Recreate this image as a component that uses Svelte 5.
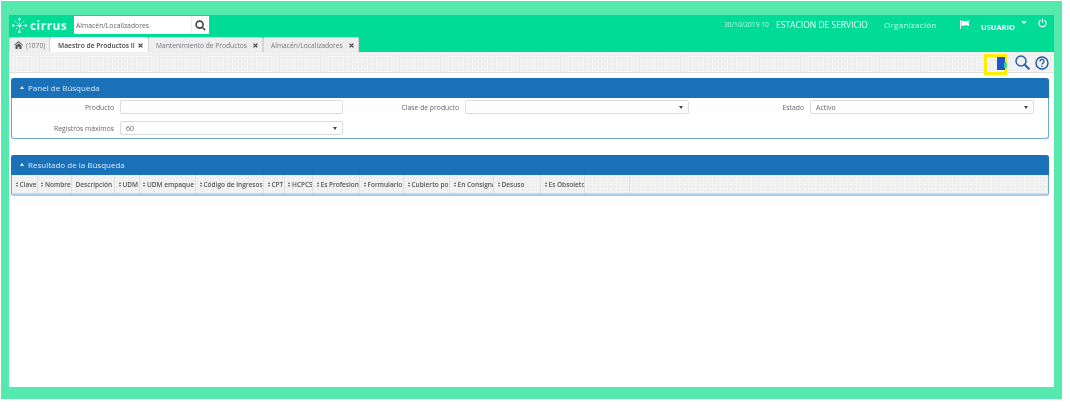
<script>
  const cols = [
    ['Clave', 25.5, 1], ['Nombre', 34.5, 1], ['Descripción', 43, 0], ['UDM', 24.5, 1], ['UDM empaque', 56.5, 1],
    ['Código de ingresos', 68, 1], ['CPT', 20.5, 1], ['HCPCS', 28.5, 1], ['Es Profesional', 47, 1], ['Formulario', 44, 1],
    ['Cubierto por', 46, 1], ['En Consignación', 44, 1], ['Desuso', 47, 1], ['Es Obsoleto', 44, 1], ['', 45, 0]
  ];
  const tabs = [
    ['Maestro de Productos II', 'tab active'],
    ['Mantenimiento de Productos', 'tab'],
    ['Almacén/Localizadores', 'tab']
  ];
</script>

<div class="frame">
  <div class="inner">
    <header class="top">
      <div class="bar">
        <div class="brand">
          <svg width="15" height="15" viewBox="0 0 15 15" fill="none" stroke="#d8fff0" stroke-width="0.9">
            <path d="M7.500 1v13M1 7.500h13M3 3l9 9M12 3l-9 9" stroke-dasharray="2 1.200"/>
            <circle cx="7.500" cy="1.200" r="1" fill="#fff"/><circle cx="7.500" cy="13.800" r="1" fill="#fff"/>
            <circle cx="1.200" cy="7.500" r="1" fill="#fff"/><circle cx="13.800" cy="7.500" r="1" fill="#fff"/>
          </svg>
          <span class="logo">cirrus</span>
        </div>
        <div class="search">
          <span class="q">Almacén/Localizadores</span>
          <span class="go">
            <svg width="11" height="11" viewBox="0 0 11 11" fill="none" stroke="#444" stroke-width="1.600"><circle cx="4.600" cy="4.600" r="3.500"/><path d="M7.200 7.200l3 3"/></svg>
          </span>
        </div>
        <div class="right">
          <span class="date">30/10/2019 10</span>
          <span class="station">ESTACION DE SERVICIO</span>
          <span class="org">Organización</span>
          <svg class="flag" width="10" height="9" viewBox="0 0 10 9" fill="#fff"><path d="M0 0h1v9H0zM1.500 1c2-1 3 .6 5 0l3-.5-1 2.500 1 2.500c-3 .6-4-.6-5 0l-3 .5z"/></svg>
          <span class="user">USUARIO</span>
          <span class="caret"></span>
          <svg class="power" width="9" height="10" viewBox="0 0 9 10" fill="none" stroke="#fff" stroke-width="1.200"><path d="M2.500 2.300a3.600 3.600 0 1 0 4 0M4.500 .5v4"/></svg>
        </div>
      </div>
      <nav class="tabs">
        <div class="tab home">
          <svg width="9" height="8" viewBox="0 0 9 8" fill="#555"><path d="M4.500 0L0 4l.6.6L4.500 1.300 8.400 4.600 9 4zM1.500 4.800V8h2.200V5.700h1.600V8h2.200V4.800L4.500 2.200z"/></svg>
          <span>(1070)</span>
        </div>
        {#each tabs as [label, cls]}
          <div class={cls}>
            <span class="tl">{label}</span>
            <svg class="x" width="5" height="5" viewBox="0 0 5 5" stroke="#444" stroke-width="1.300"><path d="M.6 .6l3.800 3.800M4.400 .6L.6 4.400"/></svg>
          </div>
        {/each}
      </nav>
    </header>

    <div class="tools">
      <span class="hl"><i class="blue"></i><i class="dot"></i></span>
      <svg class="lens" width="15" height="15" viewBox="0 0 15 15" fill="none" stroke="#1f5fb0" stroke-width="1.500"><circle cx="6" cy="6" r="5"/><path d="M9.800 9.800l4.500 4.500" stroke-width="2"/></svg>
      <svg class="help" width="14" height="14" viewBox="0 0 14 14" fill="none" stroke="#1c55a8" stroke-width="1.400"><circle cx="7" cy="7" r="6"/><path d="M5 5.400a2 2 0 1 1 3 1.700c-.7.400-1 .8-1 1.500" stroke-width="1.300"/><path d="M7 9.800v1.300"/></svg>
    </div>

    <section class="panel first">
      <h2><span class="tri"></span>Panel de Búsqueda</h2>
      <div class="form">
        <label for="p">Producto</label><input id="p" class="field" />
        <span class="lab">Clase de producto</span><div class="field sel"><span></span><b></b></div>
        <span class="lab">Estado</span><div class="field sel"><span>Activo</span><b></b></div>
        <span class="lab">Registros máximos</span><div class="field sel"><span>60</span><b></b></div>
      </div>
    </section>

    <section class="panel second">
      <h2><span class="tri"></span>Resultado de la Búsqueda</h2>
      <div class="thead">
        {#each cols as [name, w, sort]}
          <div class="th" style="width:{w}px">
            {#if sort}<span class="sort"><i></i><i></i></span>{/if}<span class="n">{name}</span>
          </div>
        {/each}
      </div>
    </section>
  </div>
</div>

<style>
  :global(body) { margin: 0; background: #fff; }
  * { box-sizing: border-box; }
  .frame {
    width: 1061px; height: 398px; margin: 1px 0 0 1px;
    padding: 14px 8px 12px 8px; background: #56e9ad;
    font-family: "Open Sans", "Noto Sans", sans-serif; color: #555;
  }
  .inner { height: 372px; background: #fff; padding-bottom: 1px; filter: blur(.3px); }
  .top { background: #00dc96; height: 37px; display: flex; flex-direction: column; }
  .bar { height: 22px; display: flex; align-items: flex-start; padding-left: 3px; }
  .brand { display: flex; align-items: center; gap: 3px; width: 62px; height: 20px; }
  .logo { color: #e8fff6; font: 700 12px "Open Sans", sans-serif; letter-spacing: .45px; }
  .search {
    width: 135px; height: 18px; margin-top: 1px; background: #fff; display: flex;
    align-items: center; justify-content: space-between;
  }
  .q { font-size: 6.800px; color: #666; padding-left: 2px; }
  .go { width: 18px; height: 18px; border-left: 1px solid #eee; display: flex; align-items: center; justify-content: center; }
  .right { flex: 1; position: relative; display: flex; align-items: center; height: 18px; padding-left: 515px; color: #d8fbec; }
  .date { font-size: 6.700px; width: 52px; color: #bff5df; white-space: nowrap; }
  .station { font-size: 8.500px; width: 108px; color: #f0fff9; white-space: nowrap; }
  .org { font-size: 8px; width: 76px; letter-spacing: .3px; color: #c9f8e4; white-space: nowrap; }
  .flag { width: 10px; margin-right: 11px; }
  .user { font-size: 7.500px; font-weight: 700; color: #f4fffa; width: 40px; margin-top: 6px; white-space: nowrap; }
  .caret { width: 0; height: 0; border: 3px solid transparent; border-top: 3px solid #fff; border-bottom: 0; margin: -3px 11px 0 0; }
  .power { margin-top: -3px; }

  .tabs { height: 15px; display: flex; }
  .tab {
    height: 15px; background: #eee; border: 1px solid #d5d5d5; border-bottom: 0;
    display: flex; align-items: center; font-size: 6.700px; color: #777; white-space: nowrap;
    border-radius: 2px 2px 0 0; position: relative; padding-left: 7px;
  }
  .tab:nth-child(3) { width: 115px; }
  .tab:nth-child(4) { width: 96px; }
  .tab.home { width: 41px; gap: 3px; padding-left: 4px; }
  .tab.active { background: #fff; color: #444; font-weight: 600; width: 98px; padding-left: 7px; border-color: #fff; }
  .x { position: absolute; right: 4px; top: 5px; }

  .tools {
    height: 21px; display: flex; justify-content: flex-end; align-items: center; gap: 5px;
    padding-right: 5px; position: relative; border-bottom: 1px solid #ddd;
    background-color: #efefef;
    background-image:
      radial-gradient(#fff 0.7px, transparent 0.8px),
      radial-gradient(#fafafa 0.6px, transparent 0.7px);
    background-size: 3px 3px, 5px 5px;
    background-position: 0 0, 1px 2px;
  }
  .hl { position: absolute; left: 975px; top: 2px; width: 23px; height: 21px; border: 3px solid #ffee00; z-index: 2; }
  .blue { position: absolute; left: 10px; top: 0; width: 8px; height: 13px; background: #1f55c4; }
  .dot { position: absolute; right: -3px; top: 5px; width: 3px; height: 6px; background: #2fd59a; border-radius: 2px; }
  .lens { margin-top: 1px; }
  .help { margin-top: 1px; }

  .panel {
    width: 1038px; margin-left: 2px; border: 1px solid #6da6d8; border-top: 0; border-radius: 3px;
    background: #fff;
  }
  .first { margin-top: 5px; height: 61px; }
  .second { margin-top: 16px; height: 41px; border-bottom: 2px solid #a9c9e6; }
  h2 {
    margin: 0 -1px; height: 20px; background: #1b71b8; color: #d9e9f6;
    font-size: 8px; font-weight: 400; display: flex; align-items: center; padding: 0 0 2px 9px;
    border-radius: 3px 3px 0 0;
  }
  .tri { width: 0; height: 0; border: 2.500px solid transparent; border-top: 0; border-bottom: 3px solid #e7f1f9; margin-right: 4px; }

  .form {
    display: grid; grid-template-columns: 108px 223px 122px 224px 121px 224px;
    row-gap: 7px; padding-top: 2px; align-items: center;
  }
  .form label, .lab { font-size: 6.800px; color: #666; text-align: right; padding-right: 6px; white-space: nowrap; }
  .field {
    height: 14px; border: 1px solid #dcdcdc; border-radius: 2px; background: #fff;
    width: 100%; padding: 0 5px; margin: 0; display: block;
  }
  .sel { display: flex; align-items: center; justify-content: space-between; font-size: 7px; color: #666; }
  .sel b { width: 0; height: 0; border: 2px solid transparent; border-top: 3px solid #444; border-bottom: 0; }

  .thead {
    display: flex; height: 19px; border-bottom: 1px solid #dcdcdc;
    background-color: #efefef;
    background-image:
      radial-gradient(#fff 0.7px, transparent 0.8px),
      radial-gradient(#fafafa 0.6px, transparent 0.7px);
    background-size: 3px 3px, 5px 5px;
    background-position: 0 0, 1px 2px;
  }
  .th {
    border-right: 1px solid #e0e0e0; display: flex; align-items: center; overflow: hidden;
    padding-left: 3.500px; gap: 2px; font-size: 6.500px; font-weight: 600; color: #555; white-space: nowrap;
  }
  .sort { display: flex; flex-direction: column; gap: 1px; flex: none; }
  .sort i { display: block; width: 0; height: 0; border: 1.500px solid transparent; }
  .sort i:first-child { border-top: 0; border-bottom: 2px solid #555; }
  .sort i:last-child { border-bottom: 0; border-top: 2px solid #555; }
</style>
